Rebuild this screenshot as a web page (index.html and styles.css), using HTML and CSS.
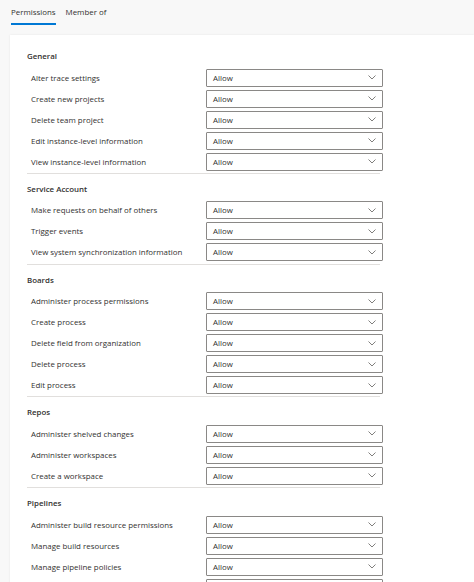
FILE: index.html
```html
<!DOCTYPE html>
<html>
<head>
<meta charset="utf-8">
<link rel="stylesheet" href="styles.css">
</head>
<body>
<div class="tabs">
  <div class="tab active">Permissions</div>
  <div class="tab">Member of</div>
</div>
<div class="card">
  <section class="group">
    <div class="group-title">General</div>
    <div class="row"><span class="label">Alter trace settings</span><div class="select"><span>Allow</span><svg class="chev" width="8" height="5" viewBox="0 0 8 5"><polyline points="0.5,0.5 4,4 7.5,0.5"/></svg></div></div>
    <div class="row"><span class="label">Create new projects</span><div class="select"><span>Allow</span><svg class="chev" width="8" height="5" viewBox="0 0 8 5"><polyline points="0.5,0.5 4,4 7.5,0.5"/></svg></div></div>
    <div class="row"><span class="label">Delete team project</span><div class="select"><span>Allow</span><svg class="chev" width="8" height="5" viewBox="0 0 8 5"><polyline points="0.5,0.5 4,4 7.5,0.5"/></svg></div></div>
    <div class="row"><span class="label">Edit instance-level information</span><div class="select"><span>Allow</span><svg class="chev" width="8" height="5" viewBox="0 0 8 5"><polyline points="0.5,0.5 4,4 7.5,0.5"/></svg></div></div>
    <div class="row"><span class="label">View instance-level information</span><div class="select"><span>Allow</span><svg class="chev" width="8" height="5" viewBox="0 0 8 5"><polyline points="0.5,0.5 4,4 7.5,0.5"/></svg></div></div>
  </section>
  <section class="group">
    <div class="group-title">Service Account</div>
    <div class="row"><span class="label">Make requests on behalf of others</span><div class="select"><span>Allow</span><svg class="chev" width="8" height="5" viewBox="0 0 8 5"><polyline points="0.5,0.5 4,4 7.5,0.5"/></svg></div></div>
    <div class="row"><span class="label">Trigger events</span><div class="select"><span>Allow</span><svg class="chev" width="8" height="5" viewBox="0 0 8 5"><polyline points="0.5,0.5 4,4 7.5,0.5"/></svg></div></div>
    <div class="row"><span class="label">View system synchronization information</span><div class="select"><span>Allow</span><svg class="chev" width="8" height="5" viewBox="0 0 8 5"><polyline points="0.5,0.5 4,4 7.5,0.5"/></svg></div></div>
  </section>
  <section class="group">
    <div class="group-title">Boards</div>
    <div class="row"><span class="label">Administer process permissions</span><div class="select"><span>Allow</span><svg class="chev" width="8" height="5" viewBox="0 0 8 5"><polyline points="0.5,0.5 4,4 7.5,0.5"/></svg></div></div>
    <div class="row"><span class="label">Create process</span><div class="select"><span>Allow</span><svg class="chev" width="8" height="5" viewBox="0 0 8 5"><polyline points="0.5,0.5 4,4 7.5,0.5"/></svg></div></div>
    <div class="row"><span class="label">Delete field from organization</span><div class="select"><span>Allow</span><svg class="chev" width="8" height="5" viewBox="0 0 8 5"><polyline points="0.5,0.5 4,4 7.5,0.5"/></svg></div></div>
    <div class="row"><span class="label">Delete process</span><div class="select"><span>Allow</span><svg class="chev" width="8" height="5" viewBox="0 0 8 5"><polyline points="0.5,0.5 4,4 7.5,0.5"/></svg></div></div>
    <div class="row"><span class="label">Edit process</span><div class="select"><span>Allow</span><svg class="chev" width="8" height="5" viewBox="0 0 8 5"><polyline points="0.5,0.5 4,4 7.5,0.5"/></svg></div></div>
  </section>
  <section class="group">
    <div class="group-title">Repos</div>
    <div class="row"><span class="label">Administer shelved changes</span><div class="select"><span>Allow</span><svg class="chev" width="8" height="5" viewBox="0 0 8 5"><polyline points="0.5,0.5 4,4 7.5,0.5"/></svg></div></div>
    <div class="row"><span class="label">Administer workspaces</span><div class="select"><span>Allow</span><svg class="chev" width="8" height="5" viewBox="0 0 8 5"><polyline points="0.5,0.5 4,4 7.5,0.5"/></svg></div></div>
    <div class="row"><span class="label">Create a workspace</span><div class="select"><span>Allow</span><svg class="chev" width="8" height="5" viewBox="0 0 8 5"><polyline points="0.5,0.5 4,4 7.5,0.5"/></svg></div></div>
  </section>
  <section class="group">
    <div class="group-title">Pipelines</div>
    <div class="row"><span class="label">Administer build resource permissions</span><div class="select"><span>Allow</span><svg class="chev" width="8" height="5" viewBox="0 0 8 5"><polyline points="0.5,0.5 4,4 7.5,0.5"/></svg></div></div>
    <div class="row"><span class="label">Manage build resources</span><div class="select"><span>Allow</span><svg class="chev" width="8" height="5" viewBox="0 0 8 5"><polyline points="0.5,0.5 4,4 7.5,0.5"/></svg></div></div>
    <div class="row"><span class="label">Manage pipeline policies</span><div class="select"><span>Allow</span><svg class="chev" width="8" height="5" viewBox="0 0 8 5"><polyline points="0.5,0.5 4,4 7.5,0.5"/></svg></div></div>
    <div class="row"><span class="label"></span><div class="select"></div></div>
  </section>
</div>
</body>
</html>
```

FILE: styles.css
```css
html, body {
  margin: 0;
  padding: 0;
  background: #f8f8f8;
  font-family: "Open Sans", "Noto Sans", "Liberation Sans", sans-serif;
  color: #323130;
  font-size: 7.9px;
  overflow: hidden;
}

.tabs {
  display: flex;
  align-items: flex-start;
  gap: 10px;
  height: 35px;
  padding-left: 11px;
  box-sizing: border-box;
}

.tab {
  padding-top: 7px;
  padding-bottom: 5px;
  line-height: 11px;
  border-bottom: 2px solid transparent;
  color: #323130;
}

.tab.active {
  border-bottom-color: #0078d4;
}

.card {
  margin-left: 10px;
  background: #ffffff;
  box-shadow: 0 0 2px rgba(0, 0, 0, 0.08);
  padding-top: 6px;
  min-height: 600px;
}

.group {
  margin-left: 17px;
  width: 353px;
  padding-top: 6px;
  padding-bottom: 0.75px;
  border-bottom: 1px solid #e1dfdd;
}

.group-title {
  line-height: 18px;
  margin-bottom: 2px;
  font-weight: 600;
}

.row {
  display: grid;
  grid-template-columns: 179px 177px;
  align-items: center;
  height: 21px;
}

.label {
  padding-left: 4px;
  white-space: nowrap;
}

.select {
  box-sizing: border-box;
  height: 18px;
  border: 1px solid #8a8886;
  border-radius: 1px;
  display: flex;
  align-items: center;
  justify-content: space-between;
  padding-left: 6px;
  padding-right: 6px;
  background: #fff;
}

.chev {
  fill: none;
  stroke: #605e5c;
  stroke-width: 0.8;
}
```
